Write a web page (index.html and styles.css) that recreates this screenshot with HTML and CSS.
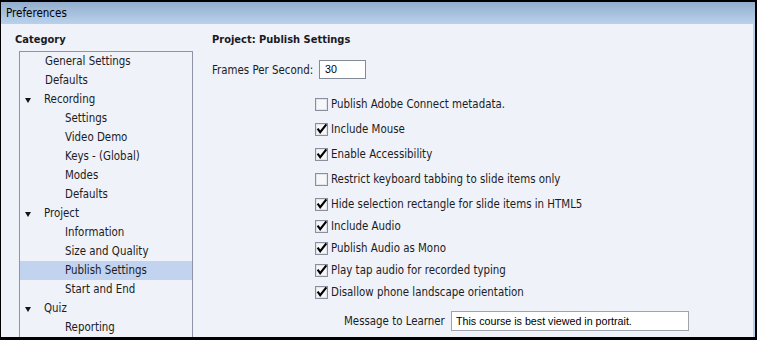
FILE: index.html
```html
<!DOCTYPE html>
<html>
<head>
<meta charset="utf-8">
<link rel="stylesheet" href="styles.css">
</head>
<body>
<div class="window">
  <div class="titlebar">Preferences</div>
  <div class="content">
    <div class="sidebar">
      <div class="heading">Category</div>
      <div class="tree">
        <div class="row l0">General Settings</div>
        <div class="row l0">Defaults</div>
        <div class="row parent"><span class="tri"></span>Recording</div>
        <div class="row l1">Settings</div>
        <div class="row l1">Video Demo</div>
        <div class="row l1">Keys - (Global)</div>
        <div class="row l1">Modes</div>
        <div class="row l1">Defaults</div>
        <div class="row parent"><span class="tri"></span>Project</div>
        <div class="row l1">Information</div>
        <div class="row l1">Size and Quality</div>
        <div class="row l1 selected">Publish Settings</div>
        <div class="row l1">Start and End</div>
        <div class="row parent"><span class="tri"></span>Quiz</div>
        <div class="row l1">Reporting</div>
      </div>
    </div>
    <div class="main">
      <div class="heading">Project: Publish Settings</div>
      <div class="fps">
        <span class="fps-label">Frames Per Second:</span>
        <div class="field fps-field">30</div>
      </div>
      <div class="checks">
        <div class="check sp3"><span class="box"></span>Publish Adobe Connect metadata.</div>
        <div class="check sp3"><span class="box on"><svg viewBox="0 0 13 13" width="13" height="13"><path d="M2.6 5.6 L5.2 9.2 L11.4 1.4" fill="none" stroke="#000" stroke-width="2.1"/></svg></span>Include Mouse</div>
        <div class="check sp3"><span class="box on"><svg viewBox="0 0 13 13" width="13" height="13"><path d="M2.6 5.6 L5.2 9.2 L11.4 1.4" fill="none" stroke="#000" stroke-width="2.1"/></svg></span>Enable Accessibility</div>
        <div class="check sp3"><span class="box"></span>Restrict keyboard tabbing to slide items only</div>
        <div class="check"><span class="box on"><svg viewBox="0 0 13 13" width="13" height="13"><path d="M2.6 5.6 L5.2 9.2 L11.4 1.4" fill="none" stroke="#000" stroke-width="2.1"/></svg></span>Hide selection rectangle for slide items in HTML5</div>
        <div class="check"><span class="box on"><svg viewBox="0 0 13 13" width="13" height="13"><path d="M2.6 5.6 L5.2 9.2 L11.4 1.4" fill="none" stroke="#000" stroke-width="2.1"/></svg></span>Include Audio</div>
        <div class="check"><span class="box on"><svg viewBox="0 0 13 13" width="13" height="13"><path d="M2.6 5.6 L5.2 9.2 L11.4 1.4" fill="none" stroke="#000" stroke-width="2.1"/></svg></span>Publish Audio as Mono</div>
        <div class="check"><span class="box on"><svg viewBox="0 0 13 13" width="13" height="13"><path d="M2.6 5.6 L5.2 9.2 L11.4 1.4" fill="none" stroke="#000" stroke-width="2.1"/></svg></span>Play tap audio for recorded typing</div>
        <div class="check"><span class="box on"><svg viewBox="0 0 13 13" width="13" height="13"><path d="M2.6 5.6 L5.2 9.2 L11.4 1.4" fill="none" stroke="#000" stroke-width="2.1"/></svg></span>Disallow phone landscape orientation</div>
      </div>
      <div class="message">
        <span class="msg-label">Message to Learner</span>
        <div class="field msg-field">This course is best viewed in portrait.</div>
      </div>
    </div>
  </div>
</div>
</body>
</html>
```
FILE: styles.css
```css
html, body {
  margin: 0;
  padding: 0;
  background: #000;
  width: 757px;
  height: 340px;
  overflow: hidden;
}
body {
  font-family: "DejaVu Sans Condensed", "Liberation Sans", sans-serif;
  font-size: 11.4px;
  color: #1c1c24;
}
.window {
  margin: 2px 2px 0 1px;
  height: 335px;
  display: flex;
  flex-direction: column;
  overflow: hidden;
}
.titlebar {
  height: 22px;
  line-height: 22px;
  padding-left: 5px;
  font-size: 11.5px;
  color: #000;
  background: linear-gradient(#93aecc, #b9d1ec);
  flex: none;
}
.content {
  flex: 1;
  background: #eff2f8;
  border-right: 2px solid #b8d0ea;
  display: flex;
  padding: 9px 0 0 14px;
  overflow: hidden;
}
.heading {
  font-weight: bold;
  font-size: 11px;
  line-height: 14px;
  height: 14px;
  color: #1a1a22;
}
.sidebar {
  width: 178px;
  flex: none;
}
.tree {
  margin: 4px 0 0 4px;
  width: 174px;
  height: 320px;
  box-sizing: border-box;
  border: 1px solid #8e94a6;
  background: #eff2f8;
}
.row {
  height: 19px;
  line-height: 19px;
  white-space: nowrap;
  display: flex;
  align-items: center;
}
.l0 { padding-left: 25px; }
.l1 { padding-left: 45px; }
.parent { padding-left: 5px; }
.tri {
  width: 0;
  height: 0;
  border-left: 3.5px solid transparent;
  border-right: 3.5px solid transparent;
  border-top: 5px solid #151515;
  margin-right: 13px;
  margin-top: 1px;
}
.selected {
  background: #c1d3ef;
}
.main {
  margin-left: 19px;
  flex: 1;
}
.fps {
  margin-top: 13px;
  height: 19px;
  display: flex;
  align-items: center;
}
.fps-label {
  width: 107px;
}
.field {
  box-sizing: border-box;
  height: 19px;
  line-height: 17px;
  background: #fff;
  border: 1px solid #838b99;
  font-family: "Liberation Sans", sans-serif;
  font-size: 10.7px;
  color: #000;
  padding-left: 4px;
  white-space: nowrap;
}
.fps-field {
  width: 47px;
  padding-left: 5px;
}
.checks {
  margin-top: 14px;
  padding-left: 103px;
}
.check {
  height: 22px;
  display: flex;
  align-items: center;
  white-space: nowrap;
}
.sp3 { margin-bottom: 3px; }
.box {
  position: relative;
  box-sizing: border-box;
  width: 13px;
  height: 13px;
  margin-right: 3px;
  border: 1px solid #8a8e9e;
  background: #f7f7f9;
  box-shadow: inset 0 0 0 1px #e2e4ea;
  flex: none;
}
.box svg {
  position: absolute;
  left: -1px;
  top: -1px;
  overflow: visible;
}
.message {
  margin-top: 8px;
  height: 20px;
  display: flex;
  align-items: center;
  padding-left: 132px;
}
.msg-label {
  width: 107px;
}
.msg-field {
  width: 238px;
  height: 20px;
  line-height: 18px;
  border-color: #9ea3ad;
}
```
